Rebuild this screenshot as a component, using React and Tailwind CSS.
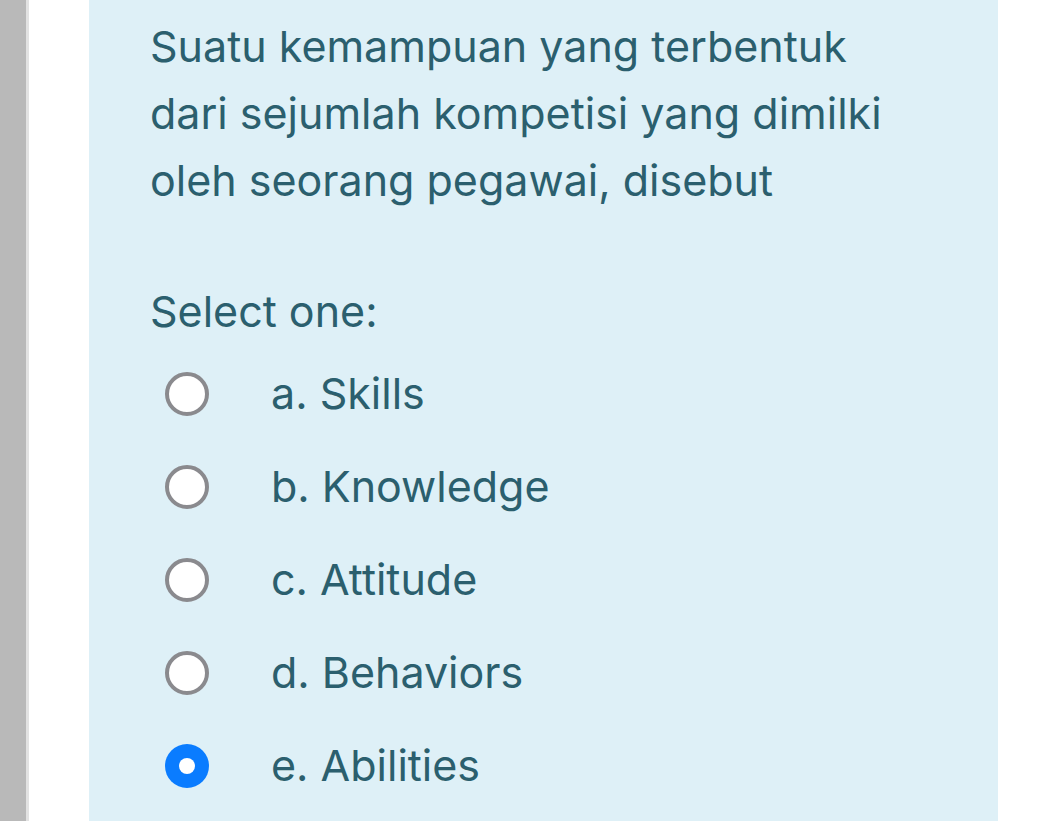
export default function App() {
  const options = [
    { key: "a", label: "a. Skills" },
    { key: "b", label: "b. Knowledge" },
    { key: "c", label: "c. Attitude" },
    { key: "d", label: "d. Behaviors" },
    { key: "e", label: "e. Abilities", checked: true },
  ];

  return (
    <div className="flex h-[821px] w-[1045px] overflow-hidden bg-white" style={{ fontFamily: "Inter, 'Noto Sans', sans-serif" }}>
      <div className="w-[26px] shrink-0 bg-[#b9b9b9]" />
      <div className="w-[3px] shrink-0 bg-[#e2e2e2]" />
      <div className="w-[60px] shrink-0 bg-white" />
      <div className="w-[909px] shrink-0 bg-[#def0f7] pl-[61px] pt-[13px] text-[#2b5f6e]">
        <p className="text-[43px] leading-[67px]">
          Suatu kemampuan yang terbentuk
          <br />
          dari sejumlah kompetisi yang dimilki
          <br />
          oleh seorang pegawai, disebut
        </p>
        <p className="mt-[64px] text-[43px] leading-[67px]">Select one:</p>
        <div className="mt-[2px] flex flex-col">
          {options.map((opt) => (
            <div key={opt.key} className="flex h-[93px] items-center">
              <span className="ml-[15px] flex h-[44px] w-[44px] items-center justify-center">
                {opt.checked ? (
                  <span className="flex h-[44px] w-[44px] items-center justify-center rounded-full bg-[#0a7cff]">
                    <span className="h-[16px] w-[16px] rounded-full bg-white" />
                  </span>
                ) : (
                  <span className="h-[44px] w-[44px] rounded-full border-[4px] border-[#8a8a8e] bg-white" />
                )}
              </span>
              <span className="ml-[62px] text-[43px]">{opt.label}</span>
            </div>
          ))}
        </div>
      </div>
    </div>
  );
}
